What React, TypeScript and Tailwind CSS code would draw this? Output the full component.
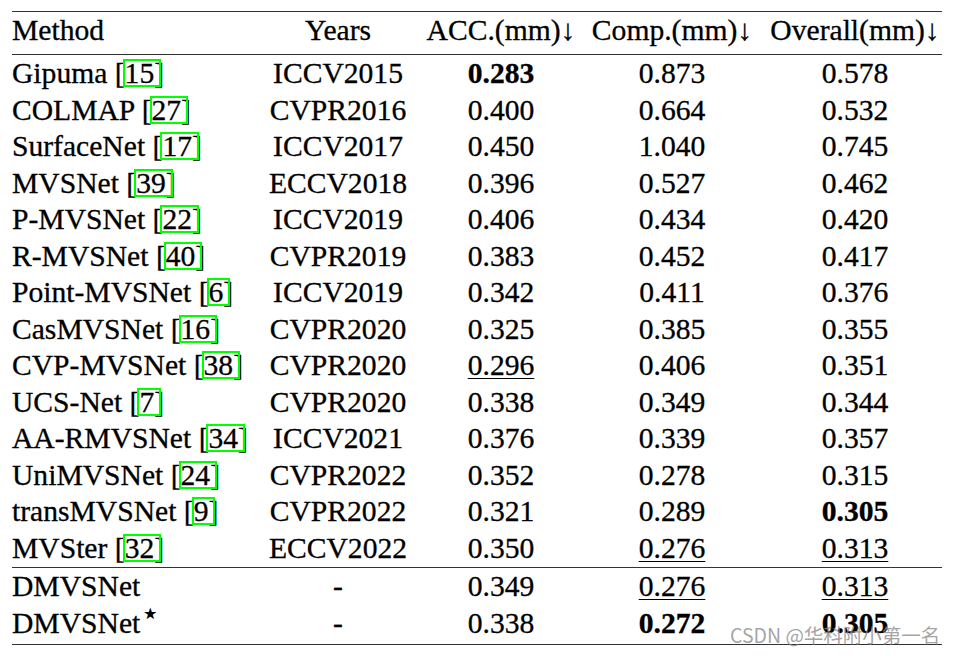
type Cell = { v: string; s?: 'b' | 'u' };
type Row = { name: string; cite?: string; year: string; acc: Cell; comp: Cell; all: Cell; star?: boolean };

const c = (v: string, s?: 'b' | 'u'): Cell => ({ v, s });

const prior: Row[] = [
    { name: 'Gipuma', cite: '15', year: 'ICCV2015', acc: c('0.283', 'b'), comp: c('0.873'), all: c('0.578') },
    { name: 'COLMAP', cite: '27', year: 'CVPR2016', acc: c('0.400'), comp: c('0.664'), all: c('0.532') },
    { name: 'SurfaceNet', cite: '17', year: 'ICCV2017', acc: c('0.450'), comp: c('1.040'), all: c('0.745') },
    { name: 'MVSNet', cite: '39', year: 'ECCV2018', acc: c('0.396'), comp: c('0.527'), all: c('0.462') },
    { name: 'P-MVSNet', cite: '22', year: 'ICCV2019', acc: c('0.406'), comp: c('0.434'), all: c('0.420') },
    { name: 'R-MVSNet', cite: '40', year: 'CVPR2019', acc: c('0.383'), comp: c('0.452'), all: c('0.417') },
    { name: 'Point-MVSNet', cite: '6', year: 'ICCV2019', acc: c('0.342'), comp: c('0.411'), all: c('0.376') },
    { name: 'CasMVSNet', cite: '16', year: 'CVPR2020', acc: c('0.325'), comp: c('0.385'), all: c('0.355') },
    { name: 'CVP-MVSNet', cite: '38', year: 'CVPR2020', acc: c('0.296', 'u'), comp: c('0.406'), all: c('0.351') },
    { name: 'UCS-Net', cite: '7', year: 'CVPR2020', acc: c('0.338'), comp: c('0.349'), all: c('0.344') },
    { name: 'AA-RMVSNet', cite: '34', year: 'ICCV2021', acc: c('0.376'), comp: c('0.339'), all: c('0.357') },
    { name: 'UniMVSNet', cite: '24', year: 'CVPR2022', acc: c('0.352'), comp: c('0.278'), all: c('0.315') },
    { name: 'transMVSNet', cite: '9', year: 'CVPR2022', acc: c('0.321'), comp: c('0.289'), all: c('0.305', 'b') },
    { name: 'MVSter', cite: '32', year: 'ECCV2022', acc: c('0.350'), comp: c('0.276', 'u'), all: c('0.313', 'u') },
];

const ours: Row[] = [
    { name: 'DMVSNet', year: '-', acc: c('0.349'), comp: c('0.276', 'u'), all: c('0.313', 'u') },
    { name: 'DMVSNet', star: true, year: '-', acc: c('0.338'), comp: c('0.272', 'b'), all: c('0.305', 'b') },
];

function Num({ cell }: { cell: Cell }) {
    if (cell.s === 'b') return <span className="font-bold">{cell.v}</span>;
    if (cell.s === 'u') return <span className="underline decoration-1 underline-offset-[3px]">{cell.v}</span>;
    return <span>{cell.v}</span>;
}

function Cite({ n }: { n: string }) {
    return (
        <>
            [<span className="relative">{n}<span className="absolute -left-[2px] -right-[7px] top-[2px] bottom-[2px] border-2 border-[#00ff00]" /></span>]
        </>
    );
}

function TableRow({ r }: { r: Row }) {
    return (
        <div className="grid grid-cols-[238px_176px_150px_192px_174px] h-[36.5px] leading-[36.5px] whitespace-nowrap">
            <div>
                {r.name}
                {r.star && <span className="relative -top-[9px] text-[32px] leading-none [-webkit-text-stroke:0px] font-[family-name:DejaVu_Sans,sans-serif]">⋆</span>}
                {r.cite && <> <Cite n={r.cite} /></>}
            </div>
            <div className="text-center">{r.year}</div>
            <div className="text-center"><Num cell={r.acc} /></div>
            <div className="text-center"><Num cell={r.comp} /></div>
            <div className="text-center"><Num cell={r.all} /></div>
        </div>
    );
}

export default function App() {
    return (
        <div className="w-[954px] h-[656px] bg-white relative overflow-hidden text-black text-[29.6px] font-[family-name:Liberation_Serif,serif] [-webkit-text-stroke:0.3px_#000]">
            <div className="ml-[12px] mt-[11px] w-[930px]">
                {/* top rule */}
                <div className="h-px bg-[#333]" />
                <div className="grid grid-cols-[238px_176px_150px_192px_174px] h-[42px] leading-[36.5px] whitespace-nowrap">
                    <div>Method</div>
                    <div className="text-center">Years</div>
                    <div className="text-center">ACC.(mm)↓</div>
                    <div className="text-center">Comp.(mm)↓</div>
                    <div className="text-center">Overall(mm)↓</div>
                </div>
                <div className="h-px bg-[#333]" />
                {prior.map((r) => <TableRow key={r.name} r={r} />)}
                <div className="h-px bg-[#333] mt-[1px]" />
                {ours.map((r, i) => <TableRow key={i} r={r} />)}
                <div className="h-px bg-[#333] mt-[3px]" />
            </div>

            {/* watermark */}
            <div className="absolute left-[730px] top-[625px] text-[19.5px] leading-[20px] text-[rgba(140,140,140,0.8)] whitespace-nowrap [-webkit-text-stroke:0px] font-[family-name:Noto_Sans_CJK_SC,sans-serif]">
                CSDN @华科附小第一名
            </div>
        </div>
    );
}
